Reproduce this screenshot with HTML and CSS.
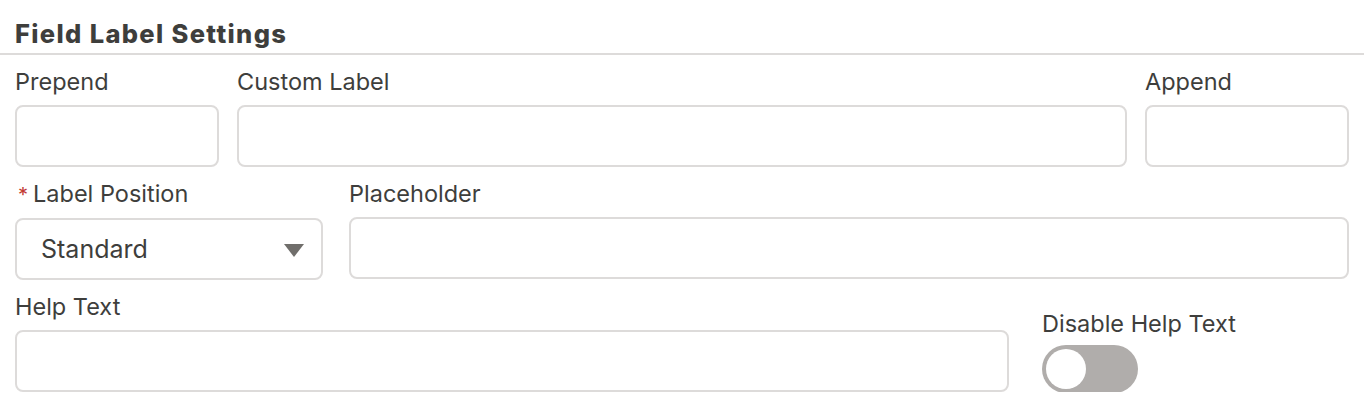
FILE: index.html
```html
<!DOCTYPE html>
<html lang="en">
<head>
<title>Field Label Settings</title>
<link rel="stylesheet" href="styles.css">
</head>
<body>
<h2 class="section-title">Field Label Settings</h2>

<form class="settings">
  <!-- prepend / custom label / append -->
  <div class="row row-label">
    <div class="field">
      <label class="field-label" for="prepend">Prepend</label>
      <input type="text" id="prepend" class="box">
    </div>
    <div class="field">
      <label class="field-label" for="customLabel">Custom Label</label>
      <input type="text" id="customLabel" class="box">
    </div>
    <div class="field">
      <label class="field-label" for="append">Append</label>
      <input type="text" id="append" class="box">
    </div>
  </div>

  <!-- position / placeholder -->
  <div class="row row-position">
    <div class="field">
      <label class="field-label" for="position"><abbr class="required" title="required">*</abbr>Label Position</label>
      <div class="select-wrap">
        <select id="position" class="box select">
          <option>Standard</option>
          <option>Inline</option>
          <option>Hidden</option>
        </select>
        <span class="caret"></span>
      </div>
    </div>
    <div class="field">
      <label class="field-label" for="placeholder">Placeholder</label>
      <input type="text" id="placeholder" class="box">
    </div>
  </div>

  <!-- help text / toggle -->
  <div class="row row-help">
    <div class="field">
      <label class="field-label" for="helpText">Help Text</label>
      <input type="text" id="helpText" class="box">
    </div>
    <div class="field toggle-field">
      <label class="field-label" for="disableHelp">Disable Help Text</label>
      <label class="toggle">
        <input type="checkbox" id="disableHelp">
        <span class="track"><span class="knob"></span></span>
      </label>
    </div>
  </div>
</form>
</body>
</html>
```

FILE: styles.css
```css
body {
  margin: 0;
  font-family: Inter, "Liberation Sans", sans-serif;
  color: #3e3e3c;
  background: #fff;
}

.section-title {
  margin: 0;
  padding: 18px 15px 3px;
  font-size: 25.5px;
  line-height: 32px;
  font-weight: 800;
  letter-spacing: 1.35px;
  border-bottom: 2px solid #dddbda;
}

.settings {padding: 0 15px;}

.row {display: grid; margin-top: 12px;}
.row-label {grid-template-columns: 204px 1fr 204px; column-gap: 18px;}
.row-position {grid-template-columns: 308px 1fr; column-gap: 26px;}
.row-help {grid-template-columns: 994px auto; column-gap: 33px;}

.field {display: flex; flex-direction: column;}
.field-label {
  font-size: 23.5px;
  line-height: 30px;
  margin-bottom: 8px;
}

.required {
  color: #c23934;
  text-decoration: none;
  font-size: 20px;
  margin: 0 5px 0 3px;
}

.box {
  box-sizing: border-box;
  height: 62px;
  width: 100%;
  border: 2px solid #dddbda;
  border-radius: 8px;
  background: #fff;
  font: inherit;
  font-size: 25px;
  color: #3e3e3c;
  padding: 0 24px;
}

.select-wrap {position: relative;}
.select {appearance: none; -webkit-appearance: none;}
.caret {
  position: absolute;
  right: 19px;
  top: 26px;
  width: 0;
  height: 0;
  border-left: 10px solid transparent;
  border-right: 10px solid transparent;
  border-top: 13px solid #706e6b;
  pointer-events: none;
}

.toggle-field {justify-content: flex-end;}
.toggle-field .field-label {margin-bottom: 6px;}
.toggle {display: block;}
.toggle input {display: none;}
.toggle .track {
  display: block;
  width: 96px;
  height: 48px;
  border-radius: 24px;
  background: #b0adab;
  padding: 4px;
  box-sizing: border-box;
  margin-bottom: -1px;
}
.toggle .knob {
  display: block;
  width: 40px;
  height: 40px;
  border-radius: 50%;
  background: #fff;
}
```
